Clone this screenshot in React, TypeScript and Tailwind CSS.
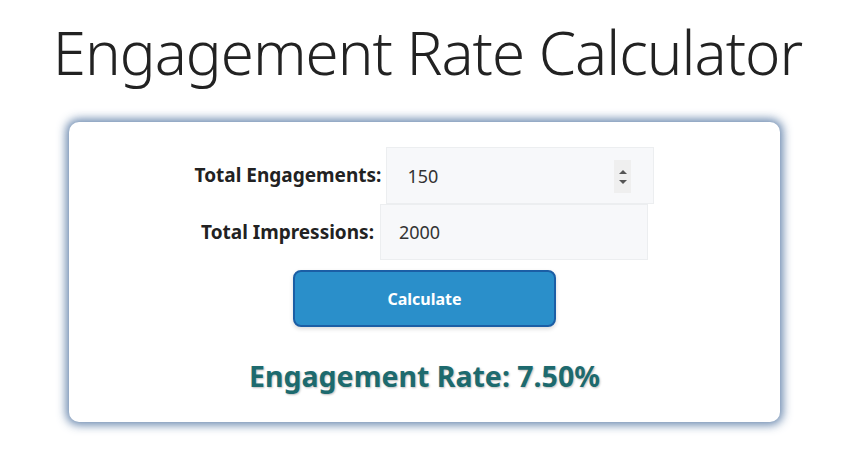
import { useState } from 'react';

export default function App() {
  const [engagements, setEngagements] = useState('150');
  const [impressions, setImpressions] = useState('2000');
  const [rate, setRate] = useState('7.50');

  const calculate = () => {
    const e = parseFloat(engagements);
    const i = parseFloat(impressions);
    if (!i) return;
    setRate(((e / i) * 100).toFixed(2));
  };

  const step = (d: number) => setEngagements(String((parseFloat(engagements) || 0) + d));

  return (
    <div className="min-h-screen bg-white flex flex-col items-center font-['Noto_Sans',sans-serif] text-[#222]">
      <h1 className="mt-[14px] text-[60px] font-light leading-[76px] tracking-[-1px]">Engagement Rate Calculator</h1>

      <div className="mt-[32px] mr-[6px] w-[711px] rounded-[10px] bg-white pt-[25px] pb-[28px] flex flex-col items-center shadow-[0_0_10px_3px_rgba(80,115,160,0.85)]">
        <div className="flex items-center">
          <label className="text-[19px] font-bold mr-[5px]">Total Engagements:</label>
          <div className="relative">
            <input
              type="number"
              value={engagements}
              onChange={(e) => setEngagements(e.target.value)}
              className="w-[268px] h-[57px] px-[20px] text-[18px] text-[#333] bg-[#f7f8fa] border border-[#eceef0] outline-none [appearance:textfield] [&::-webkit-inner-spin-button]:appearance-none [&::-webkit-outer-spin-button]:appearance-none"
            />
            {/* spinner */}
            <div className="absolute right-[23px] top-[13px] w-[17px] h-[33px] bg-[#efefef] flex flex-col items-center justify-center gap-[6px]">
              <button onClick={() => step(1)} className="w-0 h-0 border-x-[4px] border-x-transparent border-b-[4px] border-b-[#555]" />
              <button onClick={() => step(-1)} className="w-0 h-0 border-x-[4px] border-x-transparent border-t-[4px] border-t-[#555]" />
            </div>
          </div>
        </div>
        <div className="flex items-center">
          <label className="text-[19px] font-bold mr-[6px]">Total Impressions:</label>
          <input
            type="text"
            value={impressions}
            onChange={(e) => setImpressions(e.target.value)}
            className="w-[268px] h-[56px] px-[18px] text-[18px] text-[#333] bg-[#f7f8fa] border border-[#eceef0] outline-none"
          />
        </div>
        <button
          onClick={calculate}
          className="mt-[10px] w-[263px] h-[57px] rounded-[8px] bg-[#2a8fca] border-2 border-[#1b5ea5] text-white text-[16px] font-bold shadow-[0_2px_4px_rgba(0,0,0,0.15)]"
        >
          Calculate
        </button>
        <div className="mt-[31px] text-[28.5px] font-bold text-[#1d6a6e] leading-[36px] [text-shadow:1px_1px_2px_rgba(0,0,0,0.25)]">
          Engagement Rate: {rate}%
        </div>
      </div>
    </div>
  );
}
